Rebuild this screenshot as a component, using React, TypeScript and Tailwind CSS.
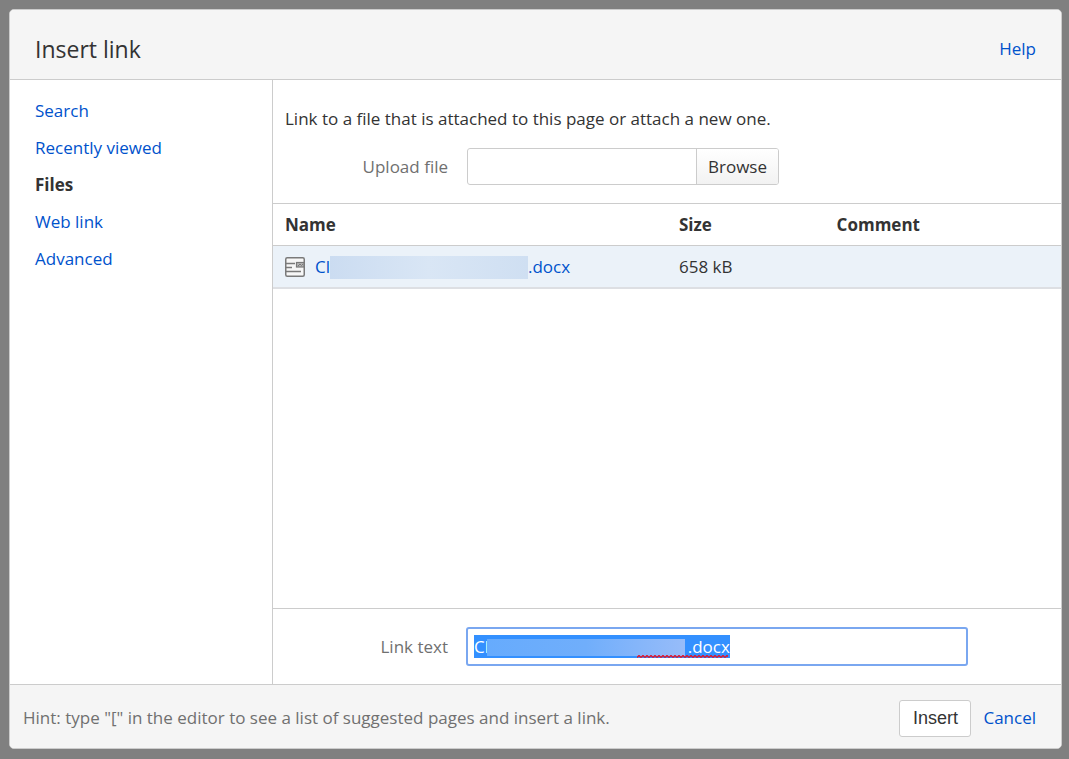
import { useEffect, useRef, useState } from "react";

type Attachment = {
  id: string;
  prefix: string;
  suffix: string;
  size: string;
  comment: string;
};

const tabs = ["Search", "Recently viewed", "Files", "Web link", "Advanced"];

const attachments: Attachment[] = [
  { id: "1", prefix: "Cl", suffix: ".docx", size: "658 kB", comment: "" },
];

// the hidden part of the file name is kept as blank space
const LINK_TEXT = "Cl" + "\u00a0".repeat(45) + ".docx";

function DocIcon() {
  return (
    <svg width="20" height="20" viewBox="0 0 20 20" fill="none" stroke="#7a7a7a" className="shrink-0" aria-hidden="true">
      <rect x="0.75" y="0.75" width="18.5" height="18.5" rx="1.5" fill="#f7f7f7" strokeWidth="1.5" />
      <path d="M1 6.5h9M1 10.5h6M1 14.5h15" strokeWidth="1.4" />
      <rect x="11.5" y="5.5" width="7.5" height="4.5" fill="#b5b5b5" strokeWidth="1.2" />
      <path d="M13 9l2-2 1.5 1.5L18 7" strokeWidth="1" />
    </svg>
  );
}

export default function App() {
  const [active, setActive] = useState("Files");
  const [linkText, setLinkText] = useState(LINK_TEXT);
  const linkRef = useRef<HTMLInputElement>(null);

  useEffect(() => {
    linkRef.current?.focus();
    linkRef.current?.select();
  }, []);

  return (
    <div className="flex min-h-screen bg-[#808080] pt-[9px] pr-[7px] pb-[10px] pl-[9px] font-['Open_Sans','Noto_Sans',sans-serif] text-[17px] leading-6 text-[#333333]">
      <div
        role="dialog"
        aria-labelledby="dialog-title"
        className="flex flex-1 flex-col overflow-hidden rounded-[5px] border border-[#cccccc] bg-white"
      >
        {/* Header */}
        <header className="flex h-[70px] shrink-0 items-center justify-between border-b border-[#cccccc] bg-[#f5f5f5] pt-2 pr-[25px] pl-[25px]">
          <h1 id="dialog-title" className="text-[23px]">
            Insert link
          </h1>
          <a href="#help" className="text-[#0052cc]">
            Help
          </a>
        </header>

        <div className="flex flex-1">
          {/* Tabs */}
          <nav className="w-[263px] shrink-0 border-r border-[#cccccc] pt-3 pl-[25px]">
            <ul>
              {tabs.map((tab) => (
                <li key={tab}>
                  <a
                    href="#"
                    onClick={() => setActive(tab)}
                    className={tab === active ? "leading-[37px] font-bold text-[#333333]" : "leading-[37px] text-[#0052cc]"}
                  >
                    {tab}
                  </a>
                </li>
              ))}
            </ul>
          </nav>

          <main className="flex min-w-0 flex-1 flex-col">
            {/* Upload */}
            <section className="pt-[27px] pb-[18px]">
              <p className="pl-3">Link to a file that is attached to this page or attach a new one.</p>
              <div className="mt-[17px] flex items-center">
                <label htmlFor="upload" className="w-[175px] text-right text-[#707070]">
                  Upload file
                </label>
                <div className="ml-[19px] flex h-[37px] w-[312px] overflow-hidden rounded-[3px] border border-[#cccccc]">
                  <input id="upload" type="text" className="min-w-0 flex-1 px-2 outline-none" />
                  <button
                    type="button"
                    className="w-[82px] border-l border-[#cccccc] bg-linear-to-b from-white to-[#f2f2f2]"
                  >
                    Browse
                  </button>
                </div>
              </div>
            </section>

            {/* Attached files */}
            <div className="flex-1 border-t border-[#cccccc]">
              <table className="w-full table-fixed border-collapse text-left">
                <thead>
                  <tr className="h-[41px] border-b border-[#cccccc]">
                    <th className="w-1/2 pt-0.5 pl-3 font-bold">Name</th>
                    <th className="w-1/5 pt-0.5 pl-3 font-bold">Size</th>
                    <th className="pt-0.5 pl-3 font-bold">Comment</th>
                  </tr>
                </thead>
                <tbody>
                  {attachments.map((file) => (
                    <tr key={file.id} className="h-[43px] border-b-2 border-[#dddfe3] bg-[#ebf2f9]">
                      <td className="pt-0.5 pl-3">
                        <div className="flex items-center">
                          <DocIcon />
                          <a href="#file" className="ml-[10px] flex items-center text-[#0052cc]">
                            {file.prefix}
                            <span className="h-[23px] w-[198px] bg-linear-to-r from-[#cbdcf1] via-[#d9e6f5] to-[#cfdff2]" />
                            {file.suffix}
                          </a>
                        </div>
                      </td>
                      <td className="pt-0.5 pl-3">{file.size}</td>
                      <td className="pt-0.5 pl-3">{file.comment}</td>
                    </tr>
                  ))}
                </tbody>
              </table>
            </div>

            {/* Link text */}
            <section className="flex items-center border-t border-[#cccccc] py-[18px]">
              <label htmlFor="link-text" className="w-[175px] text-right text-[#707070]">
                Link text
              </label>
              <div className="relative ml-[18px] w-[502px]">
                <input
                  id="link-text"
                  ref={linkRef}
                  type="text"
                  spellCheck={false}
                  value={linkText}
                  onChange={(e) => setLinkText(e.target.value)}
                  className="block h-[39px] w-full rounded-[3px] border-2 border-[#7aa7f0] bg-white px-[6px] outline-none selection:bg-[#3390ff] selection:text-white"
                />
                {linkText === LINK_TEXT && (
                  <>
                    <span className="pointer-events-none absolute top-3 left-[21px] h-[17px] w-[198px] bg-linear-to-r from-[#66abfd] via-[#70aefb] to-[#97bcf9]" />
                    <svg width="91" height="3" className="pointer-events-none absolute top-[28px] left-[171px]" aria-hidden="true">
                      <defs>
                        <pattern id="squiggle" width="4" height="3" patternUnits="userSpaceOnUse">
                          <path d="M0 2.5L2 0.5L4 2.5" fill="none" stroke="#e0162b" strokeWidth="1.4" />
                        </pattern>
                      </defs>
                      <rect width="91" height="3" fill="url(#squiggle)" />
                    </svg>
                  </>
                )}
              </div>
            </section>
          </main>
        </div>

        {/* Footer */}
        <footer className="flex h-16 shrink-0 items-center border-t border-[#cccccc] bg-[#f5f5f5] pt-[3px] pr-[25px] pl-[13px]">
          <p className="flex-1 text-[#707070]">
            Hint: type "[" in the editor to see a list of suggested pages and insert a link.
          </p>
          <button
            type="button"
            className="mr-3 h-[37px] w-[72px] rounded-[3px] border border-[#cccccc] bg-white font-['Liberation_Sans',Arial,sans-serif] text-lg"
          >
            Insert
          </button>
          <button type="button" className="text-[#0052cc]">
            Cancel
          </button>
        </footer>
      </div>
    </div>
  );
}
